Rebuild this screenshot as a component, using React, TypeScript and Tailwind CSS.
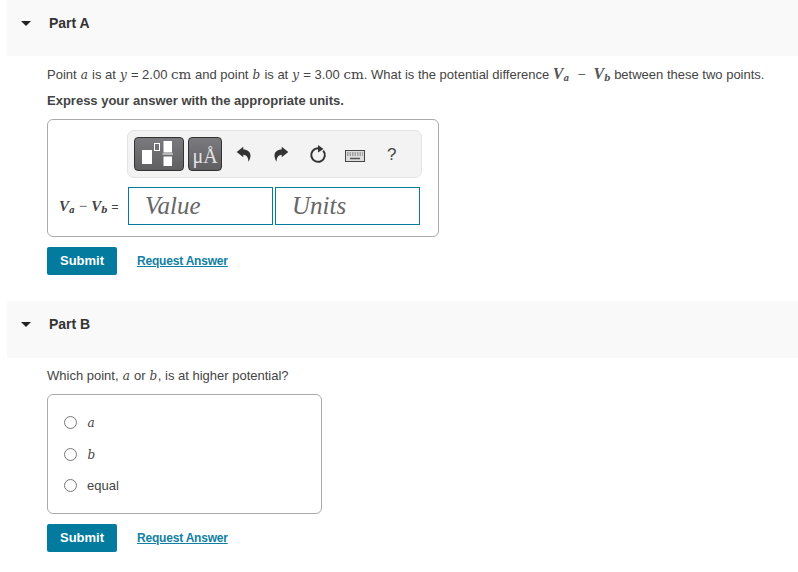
const sans = "font-['Liberation_Sans',Arial,sans-serif]";

function MathVar({ children, className = "" }: { children: React.ReactNode; className?: string }) {
  return <span className={`font-['DejaVu_Serif',serif] italic text-[12px] px-[0.5px] ${className}`}>{children}</span>;
}

function Unit() {
  return <span className="font-['DejaVu_Serif',serif] text-[13.5px]">cm</span>;
}

function Potential({ sub }: { sub: string }) {
  return (
    <span className="font-['Liberation_Serif',serif] italic text-[16px] font-bold text-[#555]">
      V<sub className="font-['DejaVu_Serif',serif] text-[9px]">{sub}</sub>
    </span>
  );
}

function Header({ title, heightClass }: { title: string; heightClass: string }) {
  return (
    <div className={`ml-[7px] bg-[#f9f9f9] flex items-start ${heightClass}`}>
      <svg width="10" height="5" viewBox="0 0 10 5" className="ml-[14px] mt-[21px] shrink-0">
        <path d="M0 0H10L5 5Z" fill="#222" />
      </svg>
      <div className="ml-[18px] mt-[15px] text-[14px] leading-[17px] font-bold text-[#333]">{title}</div>
    </div>
  );
}

function Actions() {
  return (
    <div className="flex items-center ml-[47px] mt-[10px]">
      <button className="w-[70px] h-[28px] bg-[#027b9e] rounded-[2px] text-white text-[13px] font-bold">Submit</button>
      <a className="ml-[20px] text-[12px] font-bold text-[#0f80a3] underline tracking-[-0.2px]">Request Answer</a>
    </div>
  );
}

function Radio({ children }: { children: React.ReactNode }) {
  return (
    <div className="flex items-center h-[31.5px] pl-[16px]">
      <span className="w-[13px] h-[13px] rounded-full border-[1.5px] border-[#777] bg-white shrink-0" />
      <span className="ml-[10px] text-[13px] text-[#444]">{children}</span>
    </div>
  );
}

function ToolIcon({ children, w = 20 }: { children: React.ReactNode; w?: number }) {
  return (
    <svg width={w} height="20" viewBox={`0 0 ${w} 20`} className="shrink-0">
      {children}
    </svg>
  );
}

const arrow = "M1.7 8 8.3 2.7V5.5C12.5 5.5 15.5 8 15.5 11.5 15.5 14 14.5 16.5 13.3 17.7 13.6 14 12 11 8.3 10.8V13.3Z";

export default function App() {
  return (
    <div className={`w-[798px] h-[572px] bg-white overflow-hidden text-[#444] ${sans}`}>
      <Header title="Part A" heightClass="h-[56px]" />
      <p className="ml-[47px] mt-[9px] h-[17px] leading-[17px] text-[13px] whitespace-nowrap">
        Point <MathVar>a</MathVar> is at <MathVar>y</MathVar> = 2.00 <Unit /> and point <MathVar>b</MathVar> is at <MathVar>y</MathVar> = 3.00 <Unit />. What is the potential difference{" "}
        <Potential sub="a" />
        <span className="mx-[8px] text-[14px] text-[#666]">−</span>
        <Potential sub="b" /> between these two points.
      </p>
      <p className="ml-[47px] mt-[10px] h-[17px] leading-[17px] text-[13px] font-bold whitespace-nowrap">
        Express your answer with the appropriate units.
      </p>

      <div className="ml-[47px] mt-[10px] w-[392px] h-[118px] border border-[#aaa] rounded-[6px] pt-[10px]">
        <div className="ml-[79px] w-[295px] h-[48px] bg-[#f3f3f3] border border-[#e3e3e3] rounded-[7px] flex items-center pl-[6px]">
          <div className="w-[50px] h-[34px] rounded-[4px] border border-[#333] bg-gradient-to-b from-[#7b7b7f] to-[#5f5f62] shrink-0 flex items-center justify-center">
            <svg width="34" height="26" viewBox="0 0 34 26">
              <rect x="0" y="9" width="10" height="14" fill="#fff" />
              <rect x="12.5" y="2.5" width="5" height="7" fill="none" stroke="#fff" />
              <rect x="21.5" y="0" width="8.5" height="11.5" fill="#fff" />
              <rect x="20.5" y="12.5" width="10.5" height="1" fill="#fff" />
              <rect x="21.5" y="15.5" width="8.5" height="9.5" fill="#fff" />
            </svg>
          </div>
          <div className="ml-[4px] w-[34px] h-[34px] rounded-[4px] border border-[#333] bg-gradient-to-b from-[#7b7b7f] to-[#5f5f62] shrink-0 flex items-end justify-center pb-[3px] font-['Liberation_Serif',serif] text-[#e4e4e4] text-[20px] leading-[22px]">
            μÅ
          </div>
          <div className="ml-[13px]">
            <ToolIcon w={16}>
              <path d={arrow} fill="#333" />
            </ToolIcon>
          </div>
          <div className="ml-[22px]">
            <ToolIcon w={17}>
              <path d={arrow} fill="#333" transform="matrix(-1 0 0 1 17 0)" />
            </ToolIcon>
          </div>
          <div className="ml-[18px]">
            <ToolIcon>
              <path d="M10 4.2A6.8 6.8 0 1 0 15.2 6.6" fill="none" stroke="#333" strokeWidth="2" />
              <path d="M10 1 15.5 5 10 8.5Z" fill="#333" />
            </ToolIcon>
          </div>
          <div className="ml-[17px]">
            <ToolIcon w={20}>
              <rect x="0.5" y="6.5" width="19" height="11" fill="#ddd" stroke="#444" />
              <path d="M2 9h16M2 11h16" stroke="#666" strokeDasharray="1.5 1" />
              <path d="M5 14.5h10" stroke="#555" strokeWidth="1.5" />
            </ToolIcon>
          </div>
          <span className="ml-[22px] mt-[1px] text-[17px] text-[#444]">?</span>
        </div>
        <div className="flex items-center mt-[9px]">
          <div className="w-[80px] pl-[11px] whitespace-nowrap font-['Liberation_Serif',serif] text-[15px] text-[#444]">
            <i className="font-bold">V<sub className="font-['DejaVu_Serif',serif] text-[9px]">a</sub></i>
            <span className="mx-[4px] font-normal">−</span>
            <i className="font-bold">V<sub className="font-['DejaVu_Serif',serif] text-[9px]">b</sub></i>{" "}
            <span className={`text-[12px] ${sans}`}>=</span>
          </div>
          <div className="w-[145px] h-[38px] border border-[#027b9e] pl-[16px] flex items-center font-['Liberation_Serif',serif] italic text-[25px] text-[#666]">
            Value
          </div>
          <div className="ml-[2px] w-[145px] h-[38px] border border-[#027b9e] pl-[16px] flex items-center font-['Liberation_Serif',serif] italic text-[25px] text-[#666]">
            Units
          </div>
        </div>
      </div>

      <Actions />
      <div className="h-[26px]" />
      <Header title="Part B" heightClass="h-[57px]" />
      <p className="ml-[47px] mt-[9px] h-[17px] leading-[17px] text-[13px] whitespace-nowrap">
        Which point, <MathVar>a</MathVar> or <MathVar>b</MathVar>, is at higher potential?
      </p>
      <div className="ml-[47px] mt-[10px] w-[275px] h-[120px] border border-[#aaa] rounded-[6px] pt-[12px]">
        <Radio><MathVar>a</MathVar></Radio>
        <Radio><MathVar>b</MathVar></Radio>
        <Radio>equal</Radio>
      </div>
      <Actions />
    </div>
  );
}
